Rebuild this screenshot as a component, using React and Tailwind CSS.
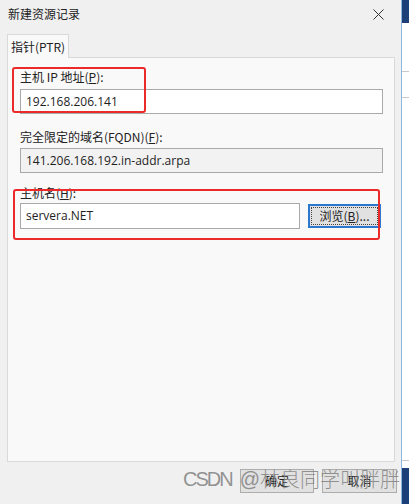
import React from "react";

const cjk = { fontFamily: '"Noto Sans CJK SC", "Noto Sans", sans-serif' };

function Field({ children, white = true, className = "" }) {
  return (
    <div
      className={`h-[25px] border border-[#a9a9a9] flex items-center pl-[5px] text-[12px] text-[#1e1e1e] ${white ? "bg-white" : "bg-[#f2f2f2]"} ${className}`}
      style={{ fontFamily: '"Open Sans", "Noto Sans", sans-serif' }}
    >
      {children}
    </div>
  );
}

export default function App() {
  return (
    <div className="w-[409px] h-[504px] flex overflow-hidden bg-[#f0f0f0]" style={cjk}>
      <div className="relative w-[402px] h-full bg-[#f0f0f0] flex flex-col border-r border-[#8fb6df]">
        {/* title bar */}
        <div className="h-[30px] flex items-center justify-between pl-[8px] pr-[17px]">
          <span className="text-[12px] text-[#222] leading-[16px] -mt-[2px]">新建资源记录</span>
          <svg width="11" height="11" viewBox="0 0 11 11" className="-mt-[2px]">
            <path d="M0.5 0.5 L10.5 10.5 M10.5 0.5 L0.5 10.5" stroke="#333" strokeWidth="1" fill="none" />
          </svg>
        </div>
        {/* body */}
        <div className="pl-[7px] pr-[6px] mt-[4px] flex flex-col">
          <div className="flex">
            <div className="h-[24px] w-[62px] border border-b-0 border-[#d9d9d9] bg-[#f9f9f9] flex items-center justify-center text-[12px] text-[#222] -mb-[1px] relative z-10">
              指针(PTR)
            </div>
          </div>
          <div className="w-[388px] h-[405px] border border-[#d9d9d9] bg-[#f9f9f9] pl-[12px] pr-[11px] pt-[11px] flex flex-col">
            <div className="text-[12px] leading-[16px] text-[#222]">
              主机 IP 地址(<span className="underline">P</span>):
            </div>
            <Field className="mt-[4px]">192.168.206.141</Field>
            <div className="text-[12px] leading-[16px] text-[#222] mt-[15px]">
              完全限定的域名(FQDN)(<span className="underline">F</span>):
            </div>
            <Field white={false} className="mt-[3px]">141.206.168.192.in-addr.arpa</Field>
            <div className="text-[12px] leading-[16px] text-[#222] mt-[12px]">
              主机名(<span className="underline">H</span>):
            </div>
            <div className="flex mt-[2px] items-center gap-[8px]">
              <Field className="w-[280px] h-[26px]">servera.NET</Field>
              <div className="w-[73px] h-[24px] border-2 border-[#2b78d0] bg-[#e1e1e1] flex items-center justify-center p-[1px]">
                <div className="w-full h-full border border-dotted border-[#444] flex items-center justify-center text-[12px] text-[#222]">
                  浏览(<span className="underline">B</span>)...
                </div>
              </div>
            </div>
          </div>
        </div>
        {/* footer buttons */}
        <div className="flex justify-end gap-[8px] pr-[4px] mt-[7px]">
          <div className="w-[74px] h-[24px] bg-[#e1e1e1] border border-[#adadad] flex items-center justify-center text-[12px] text-[#222]">确定</div>
          <div className="w-[75px] h-[24px] bg-[#e1e1e1] border border-[#adadad] flex items-center justify-center text-[12px] text-[#222]">取消</div>
        </div>

        {/* red highlight boxes */}
        <div className="absolute left-[12px] top-[67px] w-[134px] h-[46px] border-2 border-[#ec2a2a] rounded-[3px] pointer-events-none" />
        <div className="absolute left-[13px] top-[189px] w-[367px] h-[51px] border-2 border-[#ec2a2a] rounded-[3px] pointer-events-none" />

        {/* watermark */}
        <div className="absolute left-[183px] top-[465px] flex items-center whitespace-nowrap pointer-events-none text-[#808080]/85 leading-[28px]">
          <span className="text-[20px] tracking-[-2px]" style={{ fontFamily: '"Liberation Sans", sans-serif' }}>CSDN</span>
          <span className="text-[20px] ml-[8px]" style={{ fontFamily: '"Liberation Sans", sans-serif' }}>@</span>
          <span className="text-[20px] font-light" style={{ fontFamily: '"Noto Sans CJK SC", sans-serif' }}>林良同学叫胖胖</span>
        </div>
      </div>
      {/* background window strip */}
      <div className="flex-1 h-full flex flex-col bg-white">
        <div className="h-[23px] bg-[#1d3f78]" />
        <div className="h-[48px]" />
        <div className="h-px bg-[#c8c8c8]" />
        <div className="h-[25px]" />
        <div className="h-px bg-[#c8c8c8]" />
        <div className="flex-1" />
        <div className="h-px bg-[#c8c8c8]" />
        <div className="h-[7px]" />
        <div className="h-[36px] bg-[#1d3f78]" />
      </div>
    </div>
  );
}
